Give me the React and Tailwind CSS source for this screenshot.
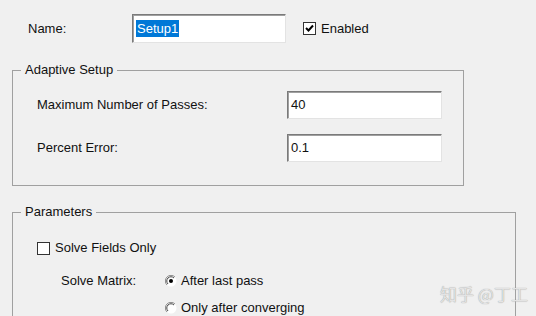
function Sunken({ className, children }) {
  return (
    <div
      className={`box-border bg-white border border-t-[#7a7a7a] border-l-[#7a7a7a] border-b-[#e3e3e3] border-r-[#e3e3e3] shadow-[inset_1px_1px_0_#a0a0a0] flex items-center pl-[3px] ${className}`}
    >
      {children}
    </div>
  );
}

function CheckBox({ checked }) {
  return (
    <div className="w-[13px] h-[13px] box-border border border-[#333] bg-white flex items-center justify-center">
      {checked && (
        <svg width="9" height="9" viewBox="0 0 9 9">
          <path d="M1 4 L3.5 6.5 L8 1.5" stroke="#000" strokeWidth="2" fill="none" />
        </svg>
      )}
    </div>
  );
}

function Radio({ checked }) {
  return (
    <svg width="12" height="12" viewBox="0 0 12 12">
      <circle cx="6" cy="6" r="5.5" fill="#fff" />
      <path d="M10 2 A5.5 5.5 0 0 0 2 10" stroke="#8a8a8a" fill="none" />
      <path d="M9 3 A4.2 4.2 0 0 0 3 9" stroke="#444" fill="none" />
      {checked && <circle cx="6" cy="6" r="2" fill="#000" />}
    </svg>
  );
}

export default function App() {
  return (
    <div
      className="relative w-[536px] h-[316px] overflow-hidden bg-[#f0f0f0] text-[13px] leading-[16px] text-[#111]"
      style={{ fontFamily: '"Liberation Sans", Arial, sans-serif' }}
    >
      <div className="mt-[14px] flex items-center h-[29px]">
        <span className="pl-[28px] w-[132px] box-border">Name:</span>
        <Sunken className="w-[154px] h-[29px]">
          <span className="bg-[#0078d7] text-white px-[1px] leading-[17px]">Setup1</span>
        </Sunken>
        <div className="ml-[17px] flex items-center gap-[5px]">
          <CheckBox checked />
          <span>Enabled</span>
        </div>
      </div>

      <fieldset className="mt-[19px] ml-[12px] w-[452px] box-border border border-[#a0a0a0] pb-[23px]">
        <legend className="ml-[8px] px-[4px] leading-[16px]">Adaptive Setup</legend>
        <div className="mt-[13px] flex items-center h-[28px]">
          <span className="w-[274px] pl-[24px] box-border">Maximum Number of Passes:</span>
          <Sunken className="w-[155px] h-[28px]">40</Sunken>
        </div>
        <div className="mt-[15px] flex items-center h-[28px]">
          <span className="w-[274px] pl-[24px] box-border">Percent Error:</span>
          <Sunken className="w-[155px] h-[28px]">0.1</Sunken>
        </div>
      </fieldset>

      <fieldset className="mt-[18px] ml-[12px] w-[504px] box-border border border-[#a0a0a0] pb-[40px]">
        <legend className="ml-[8px] px-[4px] leading-[16px]">Parameters</legend>
        <div className="mt-[20px] flex items-center h-[16px] pl-[24px] gap-[5px]">
          <CheckBox />
          <span>Solve Fields Only</span>
        </div>
        <div className="mt-[17px] flex items-center h-[16px] pl-[48px]">
          <span className="w-[104px]">Solve Matrix:</span>
          <div className="flex items-center gap-[4px]">
            <Radio checked />
            <span>After last pass</span>
          </div>
        </div>
        <div className="mt-[11px] flex items-center h-[16px] pl-[152px] gap-[4px]">
          <Radio />
          <span>Only after converging</span>
        </div>
      </fieldset>

      <div
        className="absolute left-[440px] top-[284px] text-[17px] leading-[20px] text-[#e4e4e4] [text-shadow:0_0_1px_#8c8c8c]"
        style={{ fontFamily: '"Noto Sans CJK SC", "Noto Sans", sans-serif' }}
      >
        知乎 @丁工
      </div>
    </div>
  );
}
